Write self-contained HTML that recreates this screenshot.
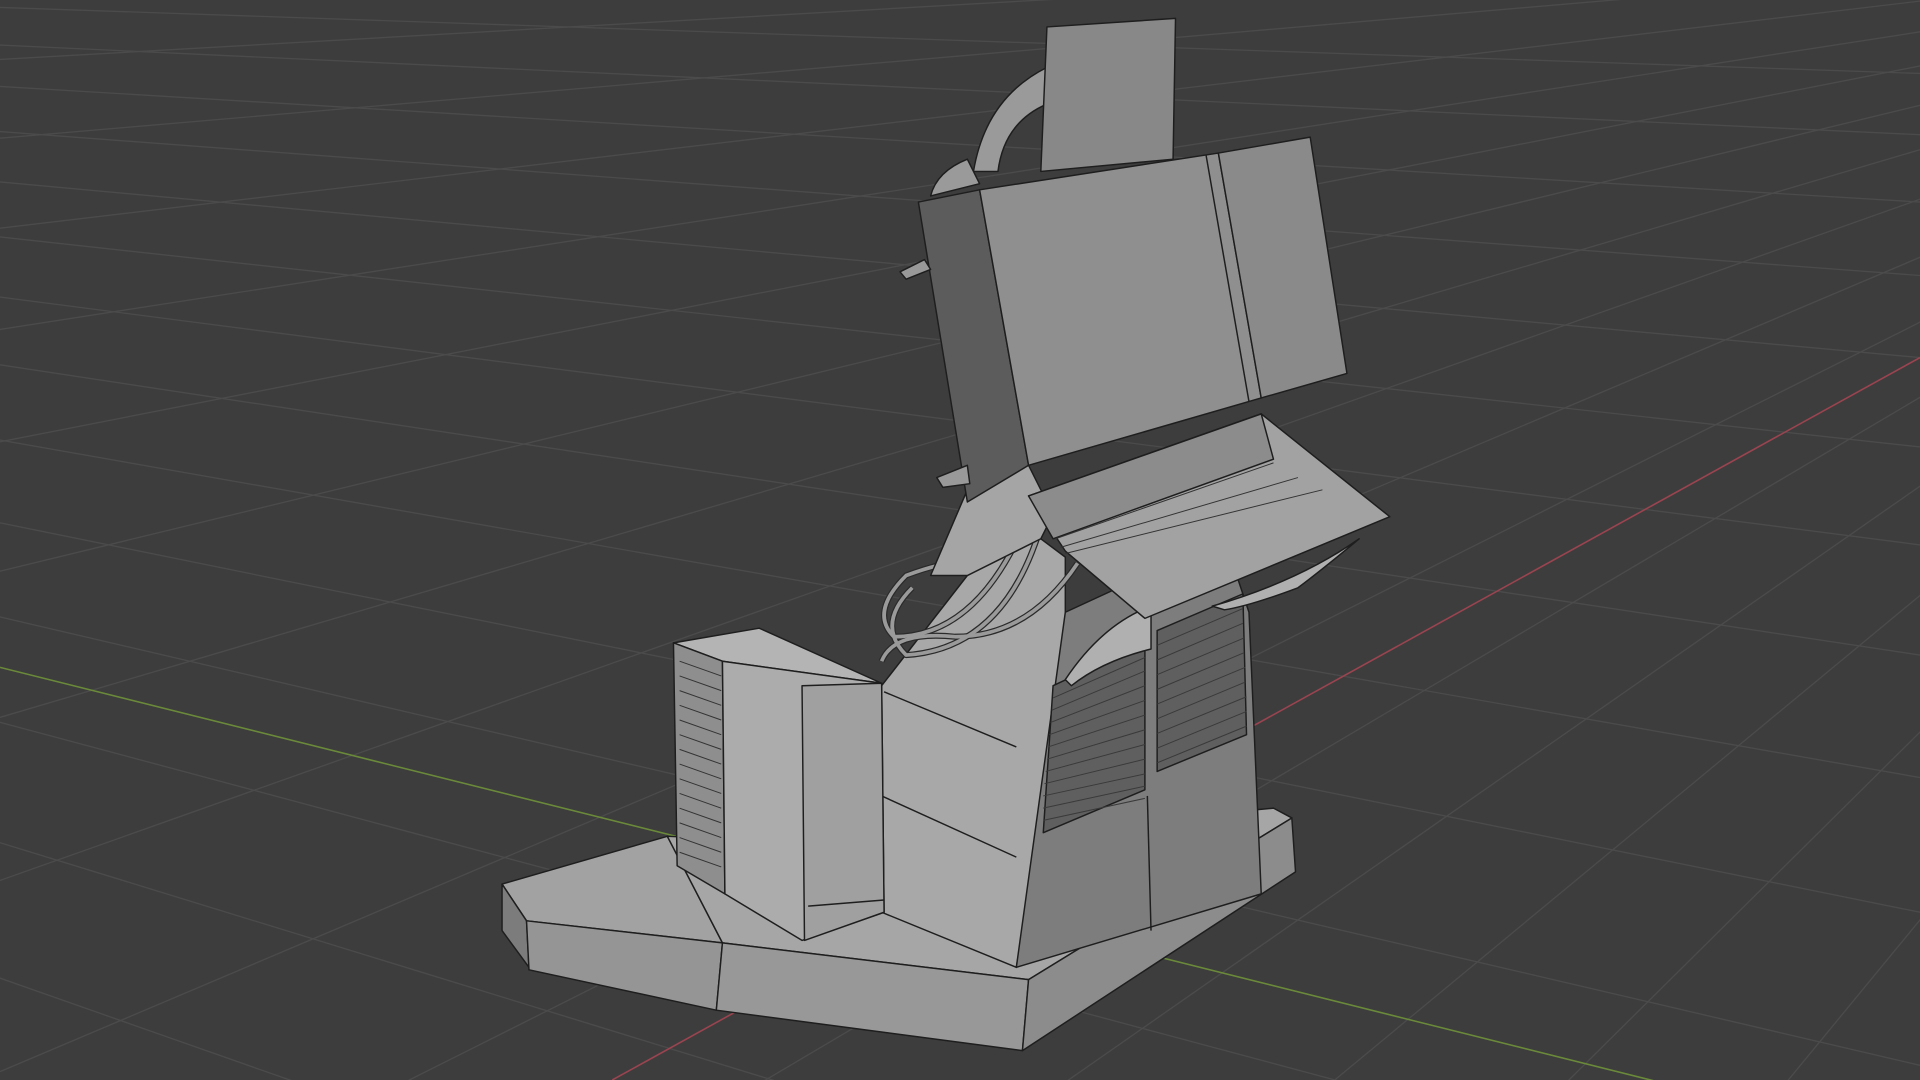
<!DOCTYPE html>
<html><head><style>html,body{margin:0;padding:0;background:#3d3d3d;overflow:hidden;width:1920px;height:1080px}svg{display:block}</style></head>
<body>
<svg width="1920" height="1080" viewBox="0 0 1568 882" preserveAspectRatio="none" xmlns="http://www.w3.org/2000/svg">
<rect width="1568" height="882" fill="#3d3d3d"/>
<g stroke="#4b4b4b" stroke-width="1.1" fill="none">
<path d="M-2500 -80L1568 60M-2500 -80L1568 110M-2500 -80L1568 165M-2500 -80L1568 225M-2500 -80L1568 292M-2500 -80L1568 365M-2500 -80L1568 445M-2500 -80L1568 535M-2500 -80L1568 635M-2500 -80L1568 745M-2500 -80L1568 870M-2500 -80L1568 1010M-2500 -80L1568 1170M-2500 -80L1568 1350M-2500 -80L1568 1560"/>
<path d="M2252 -80L-200 60M2252 -80L-200 130M2252 -80L-200 210M2252 -80L-200 300M2252 -80L-200 400M2252 -80L-200 515M2252 -80L-200 645M2252 -80L-200 790M2252 -80L-200 960M2252 -80L-200 1150M2252 -80L-200 1370M2252 -80L-200 1630M2252 -80L-200 1950M2252 -80L-200 2350M2252 -80L-200 2900M2252 -80L-200 3700M2252 -80L-200 5000"/>
</g>
<line x1="0" y1="545" x2="1568" y2="937" stroke="#6a8a3a" stroke-width="1.3"/>
<line x1="1568" y1="292" x2="500" y2="882" stroke="#9a4450" stroke-width="1.3"/>

<g stroke="#1e1e1e" stroke-width="1.2" stroke-linejoin="round">
<polygon points="410,722 545,683 590,770 430,752" fill="#a2a2a2"/>
<polygon points="410,722 430,752 432,790 410,760" fill="#7c7c7c"/>
<polygon points="430,752 590,770 585,825 432,792" fill="#959595"/>
<polygon points="545,683 720,690 1040,660 1055,668 840,800 590,770" fill="#a6a6a6"/>
<polygon points="590,770 840,800 835,858 585,825" fill="#989898"/>
<polygon points="840,800 1055,668 1058,712 835,858" fill="#8c8c8c"/>
<polygon points="720,560 790,470 850,440 870,455 870,560 830,790 720,745" fill="#a8a8a8"/>
<line x1="720" y1="650" x2="830" y2="700"/>
<line x1="722" y1="565" x2="830" y2="610"/>
<polygon points="870,500 1000,440 1020,500 1030,730 830,790" fill="#7d7d7d"/>
<polygon points="860,560 935,525 935,645 852,680" fill="#5f5f5f"/>
<polygon points="945,515 1015,485 1018,600 945,630" fill="#5f5f5f"/>
<g stroke="#3a3a3a" stroke-width="0.8">
<path d="M860 570L935 537M859 580L935 548M858 590L935 560M857 600L935 572M856 610L935 584M855 620L935 596M854 630L935 608M853 640L935 620M852 650L935 632M852 660L935 642M852 670L935 652"/>
<path d="M945 527L1015 497M945 539L1015 509M945 551L1016 521M945 563L1016 533M945 575L1017 545M945 587L1017 557M945 599L1018 569M945 611L1018 581M945 623L1018 593"/>
</g>
<line x1="937" y1="650" x2="940" y2="760"/>
<path d="M870 555 Q900 510 940 495 L940 530 Q900 540 875 560Z" fill="#b0b0b0"/>
<path d="M990 495 Q1060 475 1110 440 Q1080 465 1060 480 Q1020 495 1000 498Z" fill="#b0b0b0"/>
<g fill="none" stroke="#2a2a2a" stroke-width="5">
<path d="M840 420 Q800 520 730 520 Q710 500 740 470 Q780 455 800 460"/>
<path d="M850 430 Q820 530 740 535 Q715 510 745 480"/>
<path d="M880 460 Q840 520 780 520 Q730 515 720 540"/>
</g>
<g fill="none" stroke="#9a9a9a" stroke-width="3">
<path d="M840 420 Q800 520 730 520 Q710 500 740 470 Q780 455 800 460"/>
<path d="M850 430 Q820 530 740 535 Q715 510 745 480"/>
<path d="M880 460 Q840 520 780 520 Q730 515 720 540"/>
</g>
<polygon points="550,525 620,513 720,558 590,540" fill="#b4b4b4"/>
<polygon points="550,525 590,540 592,730 553,707" fill="#8e8e8e"/>
<g stroke="#333" stroke-width="0.8"><path d="M555 540L589 552M555 552L589 564M555 564L589 576M555 576L589 588M555 588L589 600M555 600L589 612M555 612L589 624M555 624L589 636M555 636L589 648M555 648L589 660M555 660L589 672M555 672L589 684M555 684L589 696M555 696L589 708"/></g>
<polygon points="590,540 720,558 722,745 655,768 592,730" fill="#acacac"/>
<polygon points="655,560 720,558 722,745 657,768" fill="#a0a0a0"/>
<line x1="660" y1="740" x2="722" y2="735"/>
<polygon points="790,400 840,380 860,420 850,440 790,470 760,470" fill="#a5a5a5"/>
<polygon points="840,405 1030,338 1135,422 935,505 870,450" fill="#a2a2a2"/>
<polygon points="840,405 1030,338 1040,375 860,440" fill="#8c8c8c"/>
<g stroke="#333" stroke-width="0.8" fill="none"><path d="M862 440L1040 378M866 447L1060 390M870 452L1080 400"/></g>
<polygon points="750,165 800,155 840,380 790,410" fill="#5c5c5c"/>
<polygon points="800,155 995,125 1030,325 840,380" fill="#8f8f8f"/>
<polygon points="995,125 1070,112 1100,305 1030,325" fill="#8a8a8a"/>
<line x1="985" y1="127" x2="1020" y2="328"/>
<path d="M795 140 Q805 80 855 55 L855 85 Q820 100 815 140Z" fill="#9a9a9a"/>
<path d="M760 160 Q765 140 790 130 L800 150 Z" fill="#9a9a9a"/>
<polygon points="855,22 960,15 958,130 850,140" fill="#888888"/>
<polygon points="735,222 755,212 760,220 740,228" fill="#999"/>
<polygon points="765,390 790,380 792,395 770,398" fill="#999"/>
</g>
</svg>
</body></html>
